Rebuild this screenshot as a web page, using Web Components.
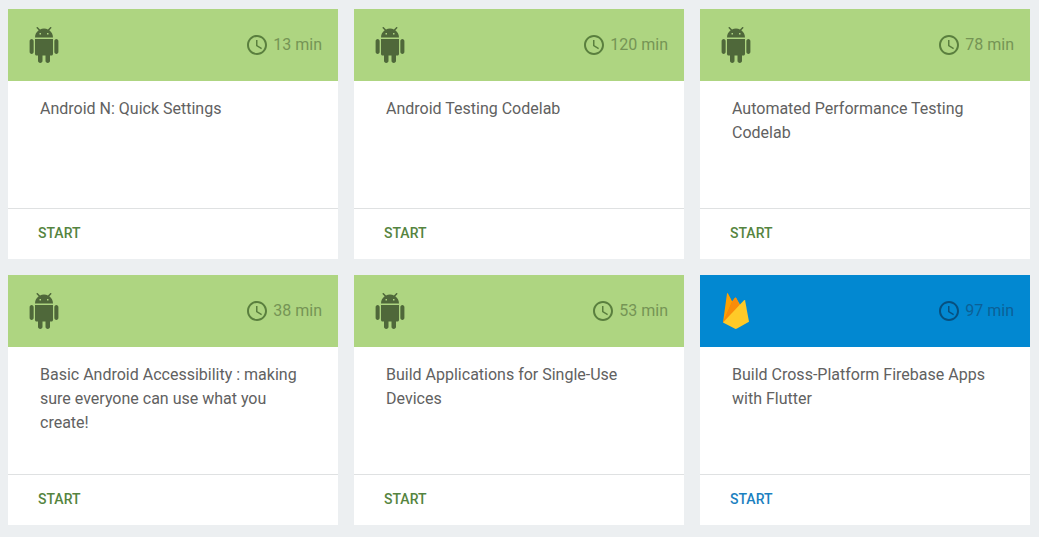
<!DOCTYPE html>
<html lang="en">
<head>
<meta charset="utf-8">
<title>Codelabs</title>
<style>
  body { margin: 0; background: #eceff1; font-family: Roboto, sans-serif; color: #616161; }
</style>
</head>
<body>
<codelab-grid>
  <codelab-card category="android" minutes="13">Android N: Quick Settings</codelab-card>
  <codelab-card category="android" minutes="120">Android Testing Codelab</codelab-card>
  <codelab-card category="android" minutes="78">Automated Performance Testing Codelab</codelab-card>
  <codelab-card category="android" minutes="38">Basic Android Accessibility : making sure everyone can use what you create!</codelab-card>
  <codelab-card category="android" minutes="53">Build Applications for Single-Use Devices</codelab-card>
  <codelab-card category="firebase" minutes="97">Build Cross-Platform Firebase Apps with Flutter</codelab-card>
</codelab-grid>

<template id="grid-template">
  <style>
    :host { display: block; padding: 9px 9px 12px 8px; }
    main { display: grid; grid-template-columns: repeat(auto-fill, minmax(300px, 1fr)); gap: 16px; }
  </style>
  <main><slot></slot></main>
</template>

<template id="duration-template">
  <style>
    :host { display: flex; align-items: center; gap: 4px; font-size: 16px; line-height: 24px; color: var(--duration); }
    svg { width: 24px; height: 24px; fill: var(--clock); }
  </style>
  <svg viewBox="0 0 24 24" aria-hidden="true"><path d="M11.99 2C6.47 2 2 6.48 2 12s4.47 10 9.99 10C17.52 22 22 17.52 22 12S17.52 2 11.99 2zM12 20c-4.42 0-8-3.58-8-8s3.58-8 8-8 8 3.58 8 8-3.58 8-8 8zm.5-13H11v6l5.25 3.15.75-1.23-4.5-2.67z"/></svg>
  <span><slot></slot></span>
</template>

<template id="icon-template">
  <style>
    :host { display: block; width: 36px; height: 36px; }
    svg { display: none; width: 36px; height: 36px; }
    :host([name="android"]) .android, :host([name="firebase"]) .firebase { display: block; }
  </style>
  <svg class="android" viewBox="0 0 24 24" fill="#4f683a" aria-hidden="true"><path d="M6 18c0 .55.45 1 1 1h1v3.5c0 .83.67 1.5 1.5 1.5s1.5-.67 1.5-1.5V19h2v3.5c0 .83.67 1.5 1.5 1.5s1.5-.67 1.5-1.5V19h1c.55 0 1-.45 1-1V8H6v10zM3.75 8C3 8 2.400 8.67 2.400 9.500v7c0 .83.600 1.500 1.350 1.500S5.100 17.330 5.100 16.500v-7C5.100 8.670 4.500 8 3.750 8zm16.500 0c-.750 0-1.350.670-1.350 1.500v7c0 .830.600 1.500 1.350 1.500s1.350-.670 1.350-1.500v-7c0-.830-.600-1.500-1.350-1.500zm-4.720-5.840l1.300-1.300c.200-.200.200-.510 0-.710-.200-.200-.510-.200-.710 0l-1.480 1.480C13.850 1.230 12.950 1 12 1c-.960 0-1.860.230-2.660.630L7.850.150c-.200-.200-.510-.200-.710 0-.200.200-.200.510 0 .710l1.310 1.310C6.970 3.260 6 5.010 6 7h12c0-1.990-.970-3.750-2.470-4.840zM10 5H9V4h1v1zm5 0h-1V4h1v1z"/></svg>
  <svg class="firebase" viewBox="0 0 36 36" aria-hidden="true">
    <path fill="#ffa000" d="M5 29.5 9 .5Q9.400-.4 10 .4L14.200 8.500 16.800 5Q17.500 4 18.200 5L24 15 5 29.500z"/>
    <path fill="#f57c00" d="M5 29.500 14.200 8.500 18.600 16.200z"/>
    <path fill="#f98c0a" d="M14.200 8.500 16.800 5Q17.500 4 18.200 5L22 14 13 23 5 29.500z"/>
    <path fill="#ffca28" d="M5 29.500 26 7.200Q26.800 6.600 27.100 7.600L31 28.800 19 35.600Q17.800 36.200 16.600 35.600z"/>
  </svg>
</template>

<template id="card-template">
  <style>
    :host { display: block; --band: #aed581; --accent: #558440; --clock: #5a7f3e; --duration: #759455; }
    :host([category="firebase"]) { --band: #0288d1; --accent: #1a80c0; --clock: #07507f; --duration: #0c6096; }
    article { display: flex; flex-direction: column; min-height: 250px; height: 100%; background: #fff; }
    header { display: flex; align-items: center; justify-content: space-between; height: 72px; padding: 0 16px 0 18px; box-sizing: border-box; background: var(--band); }
    h2 { flex: 1; margin: 0; padding: 16px 32px; font-size: 16px; line-height: 24px; font-weight: 400; }
    footer { display: flex; align-items: center; height: 51px; box-sizing: border-box; padding: 0 24px; border-top: 1px solid #dfe1e2; }
    button { margin: 0; padding: 6px 6px 8px; border: 0; background: none; color: var(--accent); font: 500 14px/24px Roboto, sans-serif; text-transform: uppercase; cursor: pointer; }
  </style>
  <article>
    <header>
      <codelab-icon></codelab-icon>
      <codelab-duration></codelab-duration>
    </header>
    <h2><slot></slot></h2>
    <footer><button type="button">Start</button></footer>
  </article>
</template>

<script>
  class TemplateElement extends HTMLElement {
    constructor() {
      super();
      const template = document.getElementById(this.constructor.template);
      this.attachShadow({ mode: 'open' }).append(template.content.cloneNode(true));
    }
  }
  class CodelabIcon extends TemplateElement { static template = 'icon-template'; }
  class CodelabDuration extends TemplateElement { static template = 'duration-template'; }
  class CodelabGrid extends TemplateElement { static template = 'grid-template'; }
  class CodelabCard extends TemplateElement {
    static template = 'card-template';
    connectedCallback() {
      this.shadowRoot.querySelector('codelab-icon').setAttribute('name', this.getAttribute('category'));
      this.shadowRoot.querySelector('codelab-duration').textContent = this.getAttribute('minutes') + ' min';
    }
  }
  customElements.define('codelab-icon', CodelabIcon);
  customElements.define('codelab-duration', CodelabDuration);
  customElements.define('codelab-card', CodelabCard);
  customElements.define('codelab-grid', CodelabGrid);
</script>
</body>
</html>
